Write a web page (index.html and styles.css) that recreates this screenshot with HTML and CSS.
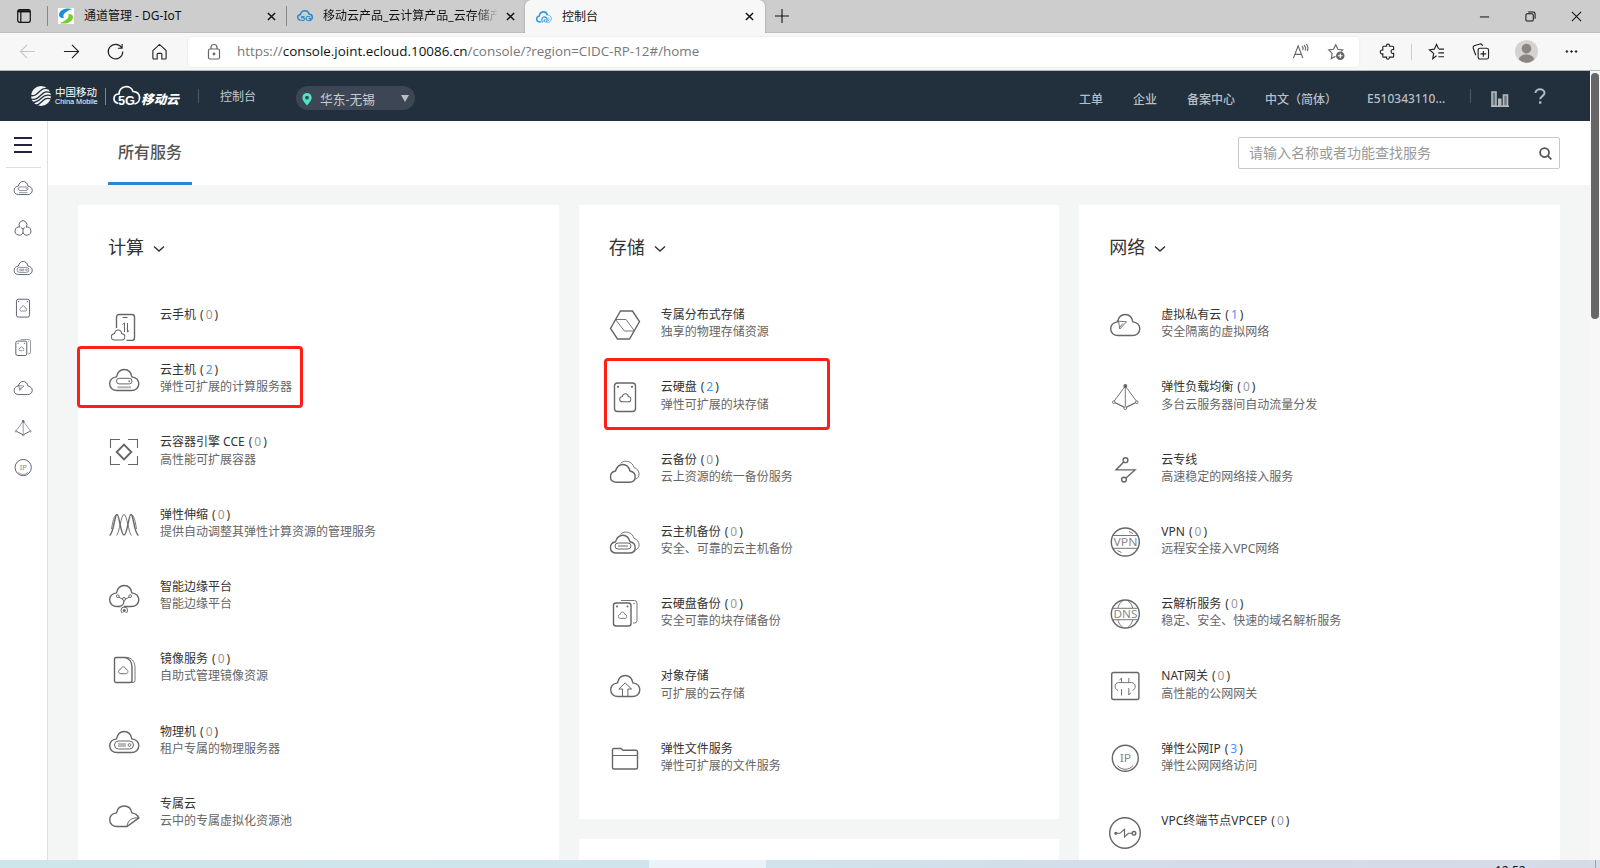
FILE: index.html
```html
<!DOCTYPE html>
<html lang="zh-CN">
<head>
    <meta charset="UTF-8">
    <meta name="viewport" content="width=device-width, initial-scale=1.0">
    <title>控制台</title>
    <link rel="stylesheet" href="styles.css">
</head>
<body>
    <!-- Icon sprite -->
    <svg class="sprite" width="0" height="0">
        <symbol id="cloud" viewBox="0 0 32 32"><path d="M9 26.5C4.8 26.5 1.7 23.8 1.7 19.8c0-3.6 2.6-6.2 6.8-6.9C9.5 8.2 12.6 5.5 16.2 5.5s6.8 2.7 7.7 7.4c4 .7 6.9 3.3 6.9 6.9 0 4-3.2 6.7-7.4 6.7z"/></symbol>
        <symbol id="server" viewBox="0 0 32 32"><use href="#cloud"/><g stroke-width="1"><rect x="8.5" y="14.3" width="15.5" height="5.6" rx="2.7"/><path d="M9.5 23.3h13.5" stroke-width="2" opacity=".5"/><path d="M20.500 17.200h1.500" stroke-width="1.600"/></g></symbol>
        <symbol id="metal" viewBox="0 0 32 32"><use href="#cloud"/><rect x="6.5" y="15" width="19" height="8" rx="4" stroke-width="1"/><path d="M10 19h8" stroke-width="4" opacity=".45"/><circle cx="21.5" cy="19" r="1.4" stroke-width=".9"/></symbol>
        <symbol id="trio" viewBox="0 0 32 32"><path d="M11 14.500a6.300 6.300 0 1 1 10 0M11 14.500a6.500 6.500 0 1 0 5 8.500 6.500 6.500 0 1 0 5-8.500M16 23v-5.500M13 15.500l3 2 3-2"/></symbol>
        <symbol id="phone" viewBox="0 0 32 32"><path d="M8.500 19V8a2.500 2.500 0 0 1 2.500-2.500h13A2.500 2.500 0 0 1 26.500 8v21a2.500 2.500 0 0 1-2.500 2.500h-5.500"/><path d="M14.500 8.500h5" stroke-width="1.100"/><use href="#cloud" x="2.500" y="18.500" width="15" height="15" stroke-width="2.300"/><path d="M14.500 15.500l2-1.500v9M19.500 14v9l1.800-1.500" stroke-width="1"/></symbol>
        <symbol id="container" viewBox="0 0 32 32"><path d="M2.500 12V3.500H12M20 3.500h9.500V12M29.500 20v8.500H20M12 28.500H2.500V20" stroke-width="1.100"/><path d="M16 8.700l7.300 7.300-7.300 7.300L8.700 16z" stroke-width="1.900"/></symbol>
        <symbol id="scaling" viewBox="0 0 32 32"><path d="M1.500 26.500C6 24 6.500 5.500 9 5.500s3.500 20.500 7 20.500S20.500 5.500 23 5.500 26 24 30.500 26.500"/><path d="M8.500 26.500C11.500 24 13 5.500 16 5.500s4.500 18.500 7.500 21M3.500 20C4.500 14 6 5.500 9 5.500M23 5.500c3 0 4.500 8 5.500 14.500" stroke-width=".9"/></symbol>
        <symbol id="edge" viewBox="0 0 32 32"><path d="M12.500 25.500H9C4.800 25.500 1.700 22.800 1.700 18.800c0-3.600 2.600-6.200 6.800-6.900 1-4.700 4.100-7.400 7.700-7.400s6.800 2.700 7.700 7.400c4 .7 6.900 3.300 6.900 6.900 0 4-3.200 6.700-7.400 6.700H16.500v1M10.500 25.500c5-.5 5.500-3 5.500-6"/><g stroke-width="1"><path d="M11 16.200l3.500 2M21 16.200l-3.500 2"/><circle cx="9.800" cy="15.200" r="1.400"/><circle cx="22.200" cy="15.200" r="1.400"/><circle cx="16" cy="18" r="1.500"/><circle cx="16.300" cy="29.300" r="3.300"/></g><circle class="fill" cx="16.300" cy="29.500" r="1.500"/></symbol>
        <symbol id="image" viewBox="0 0 32 32"><path d="M8 4.500h9.500c3.500 1 6.500 4.500 6.500 9.500v13.500a2 2 0 0 1-2 2H8a1.500 1.500 0 0 1-1.500-1.500V6A1.500 1.500 0 0 1 8 4.500z"/><path d="M17.500 4.500h3c4 1.500 6.500 5 6.500 10v13a2 2 0 0 1-2 2h-3" stroke-width=".9"/><use href="#cloud" x="10" y="12" width="10.500" height="10.500" stroke-width="2.900"/></symbol>
        <symbol id="dedicated" viewBox="0 0 32 32"><path d="M19 28.500H9C4.800 28.500 1.700 25.800 1.700 21.800c0-3.600 2.600-6.200 6.800-6.900 1-4.700 4.100-6.900 7.700-6.900s6.800 2.200 7.700 6.900c3 .5 5.600 2.200 6.900 5z"/><path d="M19 28.500c1-7 5-9 11.800-8.600" stroke-width="1"/></symbol>
        <symbol id="hexagon" viewBox="0 0 32 32"><path d="M11.500 2h12l7 10.500L20.500 30h-12l-7-10.500z"/><path d="M6.500 10.500h10.500l8.500 11.500H15.500z" stroke-width=".9"/></symbol>
        <symbol id="disk" viewBox="0 0 32 32"><rect x="5.500" y="2" width="21" height="28.500" rx="3"/><use href="#cloud" x="10" y="10.500" width="12.500" height="12.500" stroke-width="2.600"/><circle class="fill" cx="9" cy="5.800" r="1.100"/><circle class="fill" cx="23" cy="5.800" r="1.100"/></symbol>
        <symbol id="backup" viewBox="0 0 32 32"><path d="M7.500 28.200c-8 0-7.700-9.900-1-11.200 2.600-8.700 12.200-8.700 14.500 0 7 1.300 7 11.200-.5 11.200z"/><path d="M11.500 9.500c4.500-4.500 12-2 13.500 4 6.500 2 6.500 10.500 1.500 11.500" stroke-width=".9"/></symbol>
        <symbol id="server-backup" viewBox="0 0 32 32"><path d="M7.500 27c-8 0-7.700-9.900-1-11.200 2.600-8.700 12.200-8.700 14.500 0 7 1.300 7 11.200-.5 11.200z"/><path d="M11.500 8.300c4.500-4.500 12-2 13.500 4 6.500 2 6.500 10.500 1.500 11.500" stroke-width=".9"/><rect x="6" y="17" width="16" height="6" rx="3" stroke-width="1"/><path d="M9 20h10" stroke-width="1"/></symbol>
        <symbol id="disk-backup" viewBox="0 0 32 32"><rect x="4.500" y="5" width="17.500" height="23" rx="2.500"/><path d="M12 2.500h13.500A2.500 2.500 0 0 1 28 5v17.500a2.500 2.500 0 0 1-2.500 2.500H24" stroke-width=".9"/><use href="#cloud" x="8.700" y="12.500" width="9.500" height="9.500" stroke-width="3"/><circle class="fill" cx="8" cy="8.500" r="1"/><circle class="fill" cx="18.500" cy="8.500" r="1"/><circle class="fill" cx="25" cy="5.500" r=".7"/></symbol>
        <symbol id="object" viewBox="0 0 32 32"><use href="#cloud"/><path d="M13.500 26v-7H9.800l6.400-6 6.400 6h-3.700v7" stroke-width="1"/></symbol>
        <symbol id="folder" viewBox="0 0 32 32"><path d="M3.500 24.500V7A1.500 1.500 0 0 1 5 5.500h7l2 1.800h13A1.500 1.500 0 0 1 28.500 9v15.500a1.500 1.500 0 0 1-1.500 1.500H5a1.500 1.500 0 0 1-1.500-1.500z"/><path d="M3.500 12.500h25" stroke-width="1"/></symbol>
        <symbol id="vpc" viewBox="0 0 32 32"><use href="#cloud"/><path d="M7.500 12l10 .8-6.700 7.200-1.300-8M10.500 18.500l3.300-4" stroke-width=".9"/></symbol>
        <symbol id="balance" viewBox="0 0 32 32"><path d="M15.500 6L5.300 20M17 6l10.400 14M16.300 6v19" stroke-width=".9"/><path d="M5.800 21.500l10.500 5.300 10.500-5.300"/><circle class="fill" cx="16.300" cy="5" r="2"/><circle class="knot" cx="4.800" cy="21.200" r="1.300"/><circle class="knot" cx="27.800" cy="21.200" r="1.300"/><circle class="knot" cx="16.300" cy="27.200" r="1.400"/></symbol>
        <symbol id="line" viewBox="0 0 32 32"><path d="M14.700 8L7 15.900h19L17 24"/><circle cx="16.500" cy="6.200" r="2.400"/><circle cx="15" cy="25.600" r="2.400"/></symbol>
        <symbol id="vpn" viewBox="0 0 32 32"><circle cx="16.300" cy="16" r="14"/><path d="M4 9.500h24.600M4 22.300h24.600M20 5.500l4 2M8.500 24.500l4 2" stroke-width=".9"/><text x="4.500" y="19.600" textLength="24" lengthAdjust="spacingAndGlyphs">VPN</text></symbol>
        <symbol id="dns" viewBox="0 0 32 32"><circle cx="16.300" cy="16" r="14"/><path d="M4 10.300h24.600M4 21.700h24.600M9 10c1-5 4-6.500 5.500-7.800M23.600 10c-1-5-4-6.500-5.500-7.800M9 22c1 5 4 6.500 5.500 7.800M23.600 22c-1 5-4 6.500-5.500 7.800" stroke-width=".9"/><text x="4.500" y="19.600" textLength="24" lengthAdjust="spacingAndGlyphs">DNS</text></symbol>
        <symbol id="nat" viewBox="0 0 32 32"><rect x="2.700" y="2.500" width="27.200" height="27" rx="1.800"/><path d="M12.500 12.600V8l-2 2.300M19.800 8v4.600M9 20.500C5 19 5 12.600 9.500 12.600h13c4.500 0 5 6.400 1 7.900M12.500 19v6.500M19.800 18v7l2-2.300" stroke-width=".9"/></symbol>
        <symbol id="ip" viewBox="0 0 32 32"><circle cx="16.300" cy="15.300" r="13"/><path d="M8.500 22.500c4 5 11.600 5 15.600 0" stroke-width=".9"/><text class="ip" x="10.700" y="19.300" textLength="11.500" lengthAdjust="spacingAndGlyphs">IP</text></symbol>
        <symbol id="endpoint" viewBox="0 0 32 32"><circle cx="16" cy="16" r="15.300"/><path d="M7 16.300h4l4.500-4v7.600l4-3.600h3.500" stroke-width="1.100"/><circle class="fill" cx="6.800" cy="16.300" r="1.500"/><circle cx="25" cy="16.300" r="1.800"/></symbol>
        <symbol id="ecloud" viewBox="0 0 16 16"><path d="M5 13H4C-.3 13-.3 7.500 3.300 7 4 1.800 10.500 1.500 11.300 6.300"/><path d="M6.500 13.500c-2-3.500 0-6 2.500-5.500s3 4 .5 5.500M8.300 13c-.4-1.500 0-2.300 1-2" stroke-width="1.300"/><path d="M12 6c4 .5 4.500 6 1 7.200h-2.500M12 8.500c1.500 1 1.500 2.500 0 3.500" stroke-width="1" opacity=".7"/></symbol>
    </svg>

    <div class="window">
        <div class="tabbar">
            <div class="tab-menu">
                <svg width="14" height="14" viewBox="0 0 14 14"><rect x=".7" y=".7" width="12.600" height="12.600" rx="2" fill="none" stroke="#111" stroke-width="1.200"/><path d="M1 2.300h12" stroke="#111" stroke-width="2.200"/><path d="M3.800 3v10" stroke="#111" stroke-width="1.200"/></svg>
            </div>
            <div class="tab">
                <svg class="favicon" viewBox="0 0 16 16"><rect width="16" height="16" fill="#fff"/><path d="M14.500 1C9-.5 2 1 1 6.500c-.4 3 3.500 4.500 5 3C3.500 7 8 3 14.500 1z" fill="#1b8fd6"/><path d="M1.500 15c5.500 1.500 12.500 0 13.500-5.500.4-3-3.500-4.500-5-3C12.500 9 8 13 1.500 15z" fill="#76cf25"/></svg>
                <span class="tab-title">通道管理 - DG-IoT</span>
                <svg class="tab-close" viewBox="0 0 10 10"><path d="M1 1l8 8M9 1L1 9"/></svg>
            </div>
            <div class="tab">
                <svg class="favicon" viewBox="0 0 16 16"><path d="M3.500 12.500C-.5 11 0 7 3.500 6.500 4.500 1.500 11 1.500 12 6c4 .5 4.500 5 1 6.500" fill="none" stroke="#2488cf" stroke-width="1.400"/><text x="3.500" y="13" fill="#2488cf" font-size="8" font-weight="700">5G</text></svg>
                <span class="tab-title fade">移动云产品_云计算产品_云存储产</span>
                <svg class="tab-close" viewBox="0 0 10 10"><path d="M1 1l8 8M9 1L1 9"/></svg>
            </div>
            <div class="tab active">
                <svg class="favicon blue" viewBox="0 0 16 16"><use href="#ecloud"/></svg>
                <span class="tab-title">控制台</span>
                <svg class="tab-close" viewBox="0 0 10 10"><path d="M1 1l8 8M9 1L1 9"/></svg>
            </div>
            <svg class="new-tab" viewBox="0 0 14 14"><path d="M7 0v14M0 7h14"/></svg>
            <div class="window-buttons">
                <svg viewBox="0 0 12 12"><path d="M1 6.500h10"/></svg>
                <svg viewBox="0 0 12 12"><rect x="1" y="3" width="8" height="8" rx="1.500"/><path d="M3.500 1h5.500a2 2 0 0 1 2 2v5.500"/></svg>
                <svg viewBox="0 0 12 12"><path d="M1 1l10 10M11 1L1 11"/></svg>
            </div>
        </div>

        <div class="toolbar">
            <div class="nav-buttons">
                <svg class="disabled" viewBox="0 0 18 18"><path d="M17 9H1.500M8.500 2l-7 7 7 7"/></svg>
                <svg viewBox="0 0 18 18"><path d="M1 9h15.500M9.500 2l7 7-7 7"/></svg>
                <svg viewBox="0 0 18 18"><path d="M15.500 5A7.700 7.700 0 1 0 16.700 9M16 1v4.500h-4.500"/></svg>
                <svg viewBox="0 0 18 18"><path d="M2 8l7-6.500L16 8v8a1 1 0 0 1-1 1h-3.500v-5a1 1 0 0 0-1-1h-3a1 1 0 0 0-1 1v5H3a1 1 0 0 1-1-1z"/></svg>
            </div>
            <div class="address">
                <svg class="lock" viewBox="0 0 14 16"><rect x="1.500" y="5" width="11" height="10" rx="1.500"/><path d="M4 5V3.500a3 3 0 0 1 6 0V5"/><circle cx="7" cy="10" r=".8" fill="#555"/></svg>
                <span class="url">https://<b>console.joint.ecloud.10086.cn</b>/console/?region=CIDC-RP-12#/home</span>
                <svg class="read" viewBox="0 0 18 18"><path d="M1.500 16L6.500 3l5 13M3.300 12h6.500M10.500 3.500c1.300 1 1.500 2.500.8 4M12.700 2c1.800 1.800 2 4 1.200 6M15 1c2.200 2.200 2.200 5 1.200 7.500"/></svg>
                <svg class="star" viewBox="0 0 18 18"><path d="M8 14l-4.500 2.500L4.400 11 .8 7.400l5-.7L8.200 2l2.300 4.700 5 .7-1.500 1.500"/><circle cx="13" cy="13.500" r="4.500" fill="#666" stroke="none"/><path d="M13 11v5M10.500 13.500h5" stroke="#fff"/></svg>
            </div>
            <div class="tools">
                <svg viewBox="0 0 18 18"><path d="M6 3.500h2c-1-3 4-3 3 0h3.500a1 1 0 0 1 1 1V7c-3.500-1-3.500 5 0 4v3a1 1 0 0 1-1 1H11c.7 2.700-4 2.700-3 0H5a1 1 0 0 1-1-1v-2.500C.5 12.500.5 6.500 4 7.500v-3a1 1 0 0 1 1-1z"/></svg>
                <span class="tool-line"></span>
                <svg class="fav" viewBox="0 0 18 18"><path d="M9 13.500l-4 3L6 11 1.500 7.200l5.200-.7L9 1.500l2.200 4.500M11.500 6.500H17M11 10.500h6M11 14.500h6"/></svg>
                <svg class="collections" viewBox="0 0 18 18"><rect x="6.500" y="5.500" width="11" height="11.500" rx="2"/><path d="M12 8.500v6M9 11.500h6M4 13L1.300 5.500a2 2 0 0 1 1-2.500L8.500 1c1.500-.4 2 .2 2.800 2"/></svg>
                <span class="avatar"><svg viewBox="0 0 24 24"><circle cx="12" cy="9" r="5"/><path d="M4 20c1.500-6.500 14.500-6.500 16 0-5 5-11 5-16 0z"/></svg></span>
                <svg class="more" viewBox="0 0 18 18"><circle cx="3.500" cy="9" r="1"/><circle cx="9" cy="9" r="1"/><circle cx="14.500" cy="9" r="1"/></svg>
            </div>
        </div>

        <div class="viewport">
            <div class="page">
                <header class="header">
                    <svg class="cm-logo" viewBox="0 0 20 20"><circle cx="10" cy="10" r="10" fill="#f2f4f5"/><path d="M-.5 9.500c4 1 6-1 9-4s5-4 9-2.500M-.5 13c5 1.500 7.500-1 10.500-4s4.500-4 10-2.500M1 16.500c5 0 7.500-2.500 9.500-4.500s5-4 10-2M4 19.500c4-.5 6-3 8-5s4-3 8-1.500" fill="none" stroke="#22303d" stroke-width="1.300"/></svg>
                    <div class="cm-name"><span>中国移动</span><small>China Mobile</small></div>
                    <span class="logo-line"></span>
                    <svg class="cloud-logo" viewBox="0 0 28 21"><path d="M5 17.500C-1 15.500 0 8 6 8 6.500-1 18-1.500 20 5.500c8.500.5 8.500 11 1.500 12.500" fill="none" stroke="#fff" stroke-width="1.700"/><text x="5" y="18.500" fill="#fff" font-size="13" font-weight="700" textLength="17" lengthAdjust="spacingAndGlyphs">5G</text></svg>
                    <span class="cloud-name">移动云</span>
                    <span class="header-line"></span>
                    <a class="console-link">控制台</a>
                    <div class="region">
                        <svg viewBox="0 0 10 14"><path d="M5 13.500C2 9.500 0 7.500 0 5a5 5 0 0 1 10 0c0 2.500-2 4.500-5 8.500z" fill="#4de8c0"/><circle cx="5" cy="5" r="2" fill="#3c4654"/></svg>
                        <span>华东-无锡</span>
                        <i></i>
                    </div>
                    <nav class="header-nav">
                        <a>工单</a>
                        <a>企业</a>
                        <a>备案中心</a>
                        <a>中文（简体）</a>
                        <a class="user">E510343110...</a>
                    </nav>
                    <span class="header-line right"></span>
                    <svg class="bars" viewBox="0 0 18 16"><path d="M1 1h4v14H1zM12.500 4h4v11h-4z" fill="#70787f" stroke="#b3b9be" stroke-width="1.600"/><path d="M7 7.500h3.500V16H7zM0 14.500h18V16H0z" fill="#b3b9be"/></svg>
                    <svg class="help" viewBox="0 0 12 16"><path d="M1.500 5c0-5 9-5 9 0 0 3-4.300 3.200-4.300 6.300" fill="none" stroke="#b3b9be" stroke-width="2"/><rect x="5" y="13.300" width="2.400" height="2.400" fill="#b3b9be"/></svg>
                </header>

                <div class="body">
                    <aside class="sidebar">
                        <div class="menu"><i></i><i></i><i></i></div>
                        <div class="shortcuts">
                            <svg><use href="#server"/></svg>
                            <svg><use href="#trio"/></svg>
                            <svg><use href="#metal"/></svg>
                            <svg><use href="#disk"/></svg>
                            <svg><use href="#disk-backup"/></svg>
                            <svg><use href="#vpc"/></svg>
                            <svg><use href="#balance"/></svg>
                            <svg><use href="#ip"/></svg>
                        </div>
                    </aside>

                    <main class="main">
                        <div class="title-bar">
                            <h1>所有服务</h1>
                            <div class="search">
                                <span>请输入名称或者功能查找服务</span>
                                <svg viewBox="0 0 14 14"><circle cx="6" cy="6" r="4.800"/><path d="M9.500 9.500l3.800 3.800"/></svg>
                            </div>
                        </div>

                        <div class="columns">
                            <div class="column">
                                <section class="card">
                                    <h2>计算 <svg viewBox="0 0 12 8"><path d="M1 1.500l5 4.500 5-4.500"/></svg></h2>
                                    <div class="item"><svg><use href="#phone"/></svg><div><p>云手机<span class="count">(<em>0</em>)</span></p></div></div>
                                    <div class="item"><svg><use href="#server"/></svg><div><p>云主机<span class="count">(<em class="on">2</em>)</span></p><p class="desc">弹性可扩展的计算服务器</p></div><span class="mark mark-server"></span></div>
                                    <div class="item"><svg><use href="#container"/></svg><div><p>云容器引擎 CCE<span class="count">(<em>0</em>)</span></p><p class="desc">高性能可扩展容器</p></div></div>
                                    <div class="item"><svg><use href="#scaling"/></svg><div><p>弹性伸缩<span class="count">(<em>0</em>)</span></p><p class="desc">提供自动调整其弹性计算资源的管理服务</p></div></div>
                                    <div class="item"><svg><use href="#edge"/></svg><div><p>智能边缘平台</p><p class="desc">智能边缘平台</p></div></div>
                                    <div class="item"><svg><use href="#image"/></svg><div><p>镜像服务<span class="count">(<em>0</em>)</span></p><p class="desc">自助式管理镜像资源</p></div></div>
                                    <div class="item"><svg><use href="#metal"/></svg><div><p>物理机<span class="count">(<em>0</em>)</span></p><p class="desc">租户专属的物理服务器</p></div></div>
                                    <div class="item"><svg><use href="#dedicated"/></svg><div><p>专属云</p><p class="desc">云中的专属虚拟化资源池</p></div></div>
                                </section>
                            </div>

                            <div class="column">
                                <section class="card">
                                    <h2>存储 <svg viewBox="0 0 12 8"><path d="M1 1.500l5 4.500 5-4.500"/></svg></h2>
                                    <div class="item"><svg><use href="#hexagon"/></svg><div><p>专属分布式存储</p><p class="desc">独享的物理存储资源</p></div></div>
                                    <div class="item"><svg><use href="#disk"/></svg><div><p>云硬盘<span class="count">(<em class="on">2</em>)</span></p><p class="desc">弹性可扩展的块存储</p></div><span class="mark mark-disk"></span></div>
                                    <div class="item"><svg><use href="#backup"/></svg><div><p>云备份<span class="count">(<em>0</em>)</span></p><p class="desc">云上资源的统一备份服务</p></div></div>
                                    <div class="item"><svg><use href="#server-backup"/></svg><div><p>云主机备份<span class="count">(<em>0</em>)</span></p><p class="desc">安全、可靠的云主机备份</p></div></div>
                                    <div class="item"><svg><use href="#disk-backup"/></svg><div><p>云硬盘备份<span class="count">(<em>0</em>)</span></p><p class="desc">安全可靠的块存储备份</p></div></div>
                                    <div class="item"><svg><use href="#object"/></svg><div><p>对象存储</p><p class="desc">可扩展的云存储</p></div></div>
                                    <div class="item"><svg><use href="#folder"/></svg><div><p>弹性文件服务</p><p class="desc">弹性可扩展的文件服务</p></div></div>
                                </section>
                                <section class="card"></section>
                            </div>

                            <div class="column">
                                <section class="card">
                                    <h2>网络 <svg viewBox="0 0 12 8"><path d="M1 1.500l5 4.500 5-4.500"/></svg></h2>
                                    <div class="item"><svg><use href="#vpc"/></svg><div><p>虚拟私有云<span class="count">(<em class="on">1</em>)</span></p><p class="desc">安全隔离的虚拟网络</p></div></div>
                                    <div class="item"><svg><use href="#balance"/></svg><div><p>弹性负载均衡<span class="count">(<em>0</em>)</span></p><p class="desc">多台云服务器间自动流量分发</p></div></div>
                                    <div class="item"><svg><use href="#line"/></svg><div><p>云专线</p><p class="desc">高速稳定的网络接入服务</p></div></div>
                                    <div class="item"><svg><use href="#vpn"/></svg><div><p>VPN<span class="count">(<em>0</em>)</span></p><p class="desc">远程安全接入VPC网络</p></div></div>
                                    <div class="item"><svg><use href="#dns"/></svg><div><p>云解析服务<span class="count">(<em>0</em>)</span></p><p class="desc">稳定、安全、快速的域名解析服务</p></div></div>
                                    <div class="item"><svg><use href="#nat"/></svg><div><p>NAT网关<span class="count">(<em>0</em>)</span></p><p class="desc">高性能的公网网关</p></div></div>
                                    <div class="item"><svg><use href="#ip"/></svg><div><p>弹性公网IP<span class="count">(<em class="on">3</em>)</span></p><p class="desc">弹性公网网络访问</p></div></div>
                                    <div class="item low"><svg><use href="#endpoint"/></svg><div><p>VPC终端节点VPCEP<span class="count">(<em>0</em>)</span></p></div></div>
                                </section>
                            </div>
                        </div>
                    </main>
                </div>
            </div>
            <div class="scrollbar"><i></i></div>
        </div>

        <div class="taskbar">
            <span class="task-active"></span>
            <span class="clock">12:52</span>
            <span class="show-desktop"></span>
        </div>
    </div>
</body>
</html>
```
FILE: styles.css
```css
* {
    margin: 0;
    padding: 0;
    box-sizing: border-box;
}

body {
    font-family: "Noto Sans", "Noto Sans CJK SC", sans-serif;
    font-size: 12px;
    color: #333;
    overflow: hidden;
}

svg {
    display: block;
    flex: none;
    overflow: visible;
}

.sprite {
    display: none;
}

.window {
    height: 868px;
    display: flex;
    flex-direction: column;
    overflow: hidden;
}

/* Tabs */
.tabbar {
    height: 33px;
    flex: none;
    display: flex;
    align-items: center;
    background: #cdcdcd;
    border-bottom: 1px solid #bdbdbd;
}

.tab-menu {
    width: 48px;
    height: 20px;
    padding: 3px 0 0 17px;
    border-right: 1px solid #888;
}

.tab {
    width: 239px;
    height: 20px;
    display: flex;
    align-items: center;
    padding: 0 10px;
    border-right: 1px solid #888;
    color: #111;
}

.tab:nth-child(3) {
    border-right: 0;
    width: 238px;
}

.tab.active {
    width: 240px;
    height: 33px;
    background: #f7f7f7;
    border-right: 0;
    border-radius: 6px 6px 0 0;
    padding: 0 11px;
    margin-bottom: -1px;
    box-shadow: 0 0 2px rgba(0, 0, 0, 0.3);
}

.favicon {
    width: 16px;
    height: 16px;
    margin-right: 10px;
}

.favicon.blue {
    fill: none;
    stroke: #3b9ae0;
    stroke-width: 1.6;
}

.tab-title {
    flex: 1;
    white-space: nowrap;
    overflow: hidden;
    line-height: 20px;
}

.tab-title.fade {
    -webkit-mask-image: linear-gradient(90deg, #000 88%, transparent);
    mask-image: linear-gradient(90deg, #000 88%, transparent);
}

.tab-close {
    width: 9px;
    height: 9px;
    margin: 1px 0 0 8px;
    stroke: #111;
    stroke-width: 1.6;
}

.tab.active .tab-close {
    margin-top: 0;
}

.new-tab {
    width: 14px;
    height: 14px;
    margin-left: 10px;
    stroke: #111;
    stroke-width: 1.1;
}

.window-buttons {
    margin-left: auto;
    display: flex;
    gap: 35px;
    padding-right: 18px;
}

.window-buttons svg {
    width: 11px;
    height: 11px;
    fill: none;
    stroke: #111;
    stroke-width: 1.1;
}

/* Toolbar */
.toolbar {
    height: 38px;
    flex: none;
    display: flex;
    align-items: center;
    background: #f7f7f7;
    border-bottom: 1px solid #b4b6b5;
    padding-left: 19px;
}

.toolbar svg {
    width: 17px;
    height: 17px;
    fill: none;
    stroke: #222;
    stroke-width: 1.2;
}

.nav-buttons {
    display: flex;
    gap: 27px;
    width: 169px;
}

.nav-buttons .disabled {
    stroke: #c6c6c6;
}

.address {
    width: 1171px;
    height: 30px;
    display: flex;
    align-items: center;
    background: #fff;
    border-radius: 4px;
    box-shadow: 0 0 3px rgba(0, 0, 0, 0.08);
    padding: 0 14px 0 19px;
}

.address svg {
    stroke: #666;
}

.address .lock {
    width: 14px;
    height: 16px;
    margin-right: 16px;
}

.url {
    font-family: "Open Sans", sans-serif;
    font-size: 13.42px;
    color: #777;
    flex: 1;
    padding-bottom: 1px;
}

.url b {
    font-weight: 400;
    color: #111;
}

.address .read {
    margin-right: 19px;
}

.tools {
    display: flex;
    align-items: center;
    padding-left: 20px;
}

.tool-line {
    width: 1px;
    height: 16px;
    background: #ccc;
    margin: 0 16px 0 15px;
}

.tools .collections {
    margin: 0 26px 0 27px;
}

.avatar {
    width: 23px;
    height: 23px;
    border-radius: 50%;
    background: #d5d3d0;
    margin-right: 26px;
    overflow: hidden;
}

.tools .avatar svg {
    width: 23px;
    height: 23px;
    fill: #8b8683;
    stroke: none;
}

.tools .more {
    fill: #222;
    width: 15px;
}

/* Console header */
.viewport {
    flex: 1;
    min-height: 0;
    display: flex;
}

.page {
    width: 1590px;
    display: flex;
    flex-direction: column;
}

.header {
    height: 50px;
    flex: none;
    display: flex;
    align-items: center;
    background: #22303d;
    color: #b8bec4;
    padding-left: 31px;
}

.cm-logo {
    width: 20px;
    height: 20px;
    margin-right: 4px;
}

.cm-name {
    width: 45px;
    display: flex;
    flex-direction: column;
    color: #fff;
    white-space: nowrap;
}

.cm-name span {
    font-size: 10.5px;
    line-height: 12px;
}

.cm-name small {
    font-family: "Liberation Sans", sans-serif;
    font-size: 7.3px;
    line-height: 8px;
}

.logo-line {
    width: 1px;
    height: 17px;
    background: #7b838b;
    margin: 0 7px 0 5px;
}

.cloud-logo {
    width: 28px;
    height: 21px;
}

.cloud-logo text,
.favicon text {
    font-family: "Liberation Sans", sans-serif;
}

.cloud-name {
    width: 39px;
    color: #fff;
    font-size: 12.7px;
    font-weight: 900;
    font-style: italic;
    margin-top: 4px;
    white-space: nowrap;
}

.header-line {
    width: 1px;
    height: 14px;
    background: #4f5b66;
    margin-left: 18px;
}

.console-link {
    margin-left: 21px;
    color: #c5cacf;
}

.region {
    width: 119px;
    height: 24px;
    margin: 4px 0 0 40px;
    display: flex;
    align-items: center;
    background: #3c4654;
    border-radius: 12px;
    padding: 1px 6px 0;
    color: #c8ccd0;
    font-size: 12.7px;
}

.region svg {
    width: 10px;
    height: 13px;
    margin: 1px 8px 0 0;
}

.region span {
    line-height: 18px;
}

.region i {
    margin-left: auto;
    border: 4px solid transparent;
    border-top: 7px solid #b8bec4;
    border-bottom: 0;
}

.header-nav {
    margin-left: auto;
    display: flex;
    gap: 30px;
    padding-top: 5px;
    font-weight: 500;
}

.header-nav a {
    white-space: nowrap;
}

.header-nav a:nth-child(4) {
    width: 72px;
}

.header-nav .user {
    width: 80px;
}

.header-line.right {
    margin-left: 23px;
    margin-right: 20px;
}

.bars {
    width: 18px;
    height: 16px;
    margin: 5px 25px 0 0;
}

.help {
    width: 12px;
    height: 16px;
    margin: 0 44px 0 0;
}

/* Sidebar */
.body {
    flex: 1;
    min-height: 0;
    display: flex;
}

.sidebar {
    width: 48px;
    background: #fff;
    border-right: 1px solid #dcdee2;
}

.menu {
    width: 35px;
    height: 47px;
    margin-left: 6px;
    padding: 16px 9px 0 8px;
    border-bottom: 1px solid #dcdee0;
    display: flex;
    flex-direction: column;
    gap: 5px;
}

.menu i {
    height: 2px;
    background: #23233f;
}

.shortcuts {
    padding: 10px 0 0 13px;
    display: flex;
    flex-direction: column;
    gap: 20px;
}

.shortcuts svg {
    width: 20px;
    height: 20px;
    fill: none;
    stroke: #4a4d63;
    stroke-width: 1.4;
}

/* Main area */
.main {
    flex: 1;
    background: #f4f6f6;
    display: flex;
    flex-direction: column;
    overflow: hidden;
}

.title-bar {
    height: 64px;
    flex: none;
    display: flex;
    justify-content: space-between;
    background: #fff;
    padding: 0 30px 0 60px;
}

.title-bar h1 {
    width: 84px;
    height: 64px;
    line-height: 63px;
    text-align: center;
    font-size: 16px;
    font-weight: 500;
    color: #555;
    border-bottom: 3px solid #2a84d8;
}

.search {
    width: 322px;
    height: 32px;
    margin-top: 16px;
    display: flex;
    align-items: center;
    justify-content: space-between;
    border: 1px solid #c8c8c8;
    border-radius: 2px;
    padding: 0 7px 0 10px;
    font-size: 14px;
    color: #999;
}

.search span {
    margin-top: -2px;
}

.search svg {
    width: 13px;
    height: 13px;
    fill: none;
    stroke: #555;
    stroke-width: 1.9;
}

.columns {
    display: grid;
    grid-template-columns: repeat(3, 1fr);
    gap: 20px;
    padding: 20px 30px 0;
    height: 760px;
    flex: none;
}

.column {
    display: flex;
    flex-direction: column;
    gap: 20px;
}

.card {
    background: #fff;
    padding: 28px 30px 0;
}

.card:last-child {
    flex: 1;
}

.card:first-child {
    min-height: 614px;
}

.card h2 {
    display: flex;
    align-items: center;
    height: 25px;
    font-size: 18px;
    font-weight: 400;
    margin-bottom: 48px;
}

.card h2 svg {
    width: 12px;
    height: 8px;
    margin: 7px 0 0 9px;
    fill: none;
    stroke: #333;
    stroke-width: 1.5;
}

.item {
    position: relative;
    display: flex;
    align-items: flex-start;
    padding-bottom: 37.9px;
}

.item > svg {
    width: 32px;
    height: 32px;
    margin: 3px 20px -20px 0;
    fill: none;
    stroke: #666;
    stroke-width: 1.4;
}

.item.low > svg {
    margin-top: 5px;
}

.item p {
    line-height: 17.2px;
    white-space: nowrap;
}

.item .desc {
    color: #666;
}

.count {
    margin-left: 4px;
}

.count em {
    font-style: normal;
    color: #999;
    margin: 0 2px;
}

.count em.on {
    color: #4a90ff;
}

symbol text {
    font-family: "Noto Sans", sans-serif;
    font-size: 10px;
    fill: #888;
    stroke: none;
}

symbol .ip {
    font-size: 11.5px;
}

.fill {
    fill: #666;
    stroke: none;
}

.knot {
    fill: #fff;
    stroke-width: 0.9;
}

/* Highlight frames */
.mark {
    position: absolute;
    border: 3px solid #ff2015;
    border-radius: 4px;
}

.mark-server {
    left: -31px;
    top: -15px;
    width: 226px;
    height: 62px;
}

.mark-disk {
    left: -5px;
    top: -20px;
    width: 226px;
    height: 72px;
}

.scrollbar {
    width: 10px;
    background: #f7f7f7;
    padding: 2px 1px 0;
}

.scrollbar i {
    display: block;
    height: 246px;
    background: #666;
    border-radius: 4px;
}

/* Taskbar */
.taskbar {
    height: 8px;
    flex: none;
    display: flex;
    background: linear-gradient(90deg, #cde6ec 0%, #d0e4ed 45%, #d3dcea 75%, #d6dbe8 100%);
    overflow: hidden;
}

.task-active {
    width: 117px;
    margin-left: 649px;
    background: #eaf3f8;
}

.clock {
    margin: 3px 0 0 729px;
    width: 100px;
    line-height: 16px;
    color: #111;
}

.show-desktop {
    width: 1px;
    background: #9ba3b3;
}
```
